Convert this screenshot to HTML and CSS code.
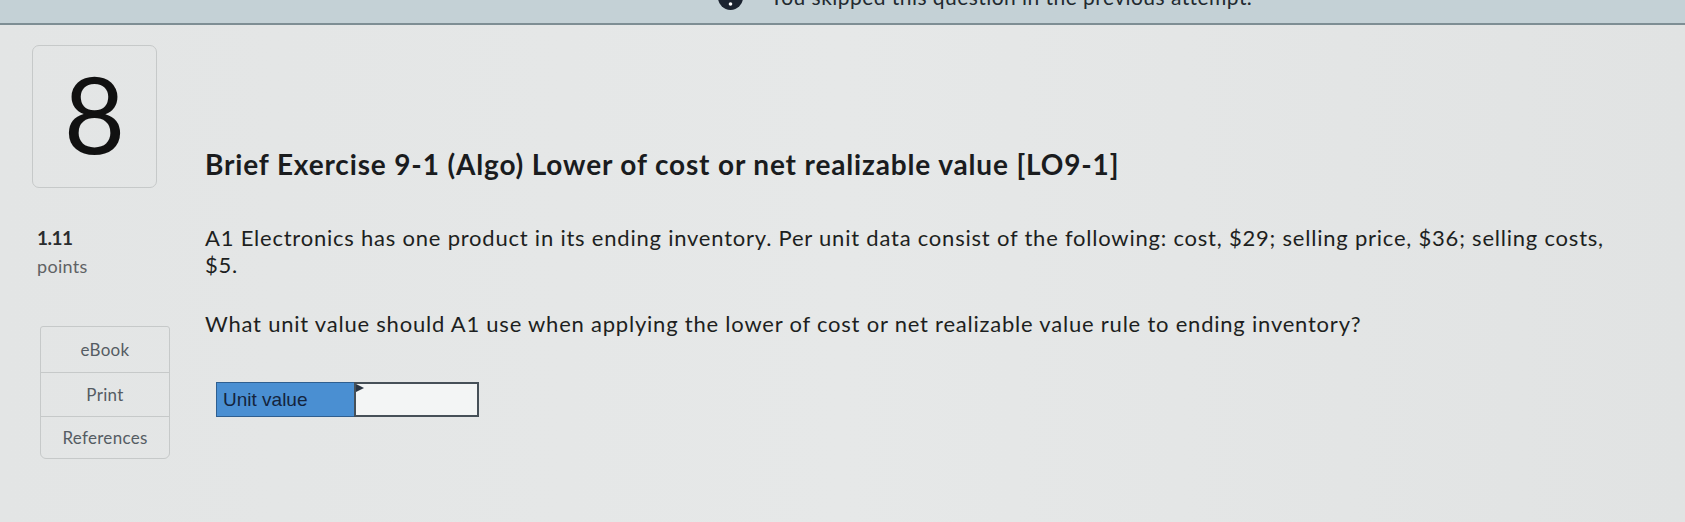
FILE: index.html
```html
<!DOCTYPE html>
<html lang="en">
<head>
<meta charset="utf-8">
<title>Brief Exercise 9-1</title>
<link rel="stylesheet" href="styles.css">
</head>
<body>
<div class="banner">
  <div class="banner-inner">
    <span class="banner-icon"><svg width="25" height="25" viewBox="0 0 25 25"><circle cx="12.5" cy="12.5" r="12.5" fill="#1b2330"/><rect x="11" y="5" width="3" height="10" rx="1.5" fill="#ffffff"/><circle cx="12.5" cy="19" r="1.8" fill="#ffffff"/></svg></span>
    <span class="banner-text">You skipped this question in the previous attempt.</span>
  </div>
</div>
<div class="page">
  <div class="header">
    <div class="qnum">8</div>
    <h1 class="title">Brief Exercise 9-1 (Algo) Lower of cost or net realizable value [LO9-1]</h1>
  </div>
  <div class="content">
    <aside class="side">
      <div class="points">
        <div class="points-value">1.11</div>
        <div class="points-label">points</div>
      </div>
      <div class="tools">
        <div class="tool tool-first">eBook</div>
        <div class="tool">Print</div>
        <div class="tool tool-last">References</div>
      </div>
    </aside>
    <main class="question">
      <p class="para">A1 Electronics has one product in its ending inventory. Per unit data consist of the following: cost, $29; selling price, $36; selling costs, $5.</p>
      <p class="para para-ask">What unit value should A1 use when applying the lower of cost or net realizable value rule to ending inventory?</p>
      <div class="answer">
        <div class="answer-label">Unit value</div>
        <div class="answer-input"><span class="answer-flag"></span></div>
      </div>
    </main>
  </div>
</div>
</body>
</html>
```
FILE: styles.css
```css
html, body {
  margin: 0;
  padding: 0;
}
body {
  width: 1685px;
  height: 522px;
  overflow: hidden;
  background: linear-gradient(90deg, #e3e5e5 0%, #e6e8e8 50%, #e1e3e3 100%);
  font-family: Lato, "Open Sans", Arial, sans-serif;
  color: #1d1f21;
}
.banner {
  height: 23px;
  background: #c4d1d6;
  border-bottom: 2px solid #7e8e94;
  overflow: hidden;
}
.banner-inner {
  display: flex;
  align-items: center;
  margin-top: -17px;
  padding-left: 718px;
  gap: 27px;
}
.banner-icon {
  display: flex;
  width: 25px;
  height: 25px;
}
.banner-text {
  font-size: 21px;
  line-height: 28px;
  color: #222a30;
  letter-spacing: 0.45px;
}
.page {
  padding-top: 20px;
}
.header {
  display: flex;
  align-items: flex-start;
}
.qnum {
  margin-left: 32px;
  width: 123px;
  border: 1px solid #c6c9c9;
  border-radius: 7px;
  display: flex;
  align-items: center;
  justify-content: center;
  font-size: 106px;
  font-weight: 400;
  line-height: 1;
  color: #111;
  padding-bottom: 8px;
  height: 133px;
  padding-top: 0;
  box-sizing: content-box;
}
.title {
  margin: 104px 0 0 48px;
  font-size: 28px;
  font-weight: 700;
  line-height: 30px;
  color: #1a1c1e;
  letter-spacing: 0.85px;
}
.content {
  display: grid;
  grid-template-columns: 205px 1fr;
  margin-top: 36px;
}
.side {
  display: flex;
  flex-direction: column;
  padding-left: 37px;
}
.points-value {
  font-size: 19px;
  font-weight: 700;
  line-height: 22px;
  color: #2a2c2e;
  letter-spacing: -0.5px;
  margin-top: 3px;
}
.points-label {
  margin-top: 6px;
  font-size: 18px;
  line-height: 22px;
  color: #5f6264;
  letter-spacing: 0.3px;
}
.tools {
  margin-top: 49px;
  margin-left: 3px;
  width: 128px;
  border: 1px solid #c6c9c9;
  border-radius: 3px 3px 6px 6px;
}
.tool {
  height: 43px;
  display: flex;
  align-items: center;
  justify-content: center;
  font-size: 17px;
  color: #555c63;
  border-top: 1px solid #c6c9c9;
  letter-spacing: 0.3px;
}
.tool-first {
  border-top: none;
  height: 45px;
}
.tool-last {
  height: 41px;
}
.question {
  padding-right: 75px;
}
.para {
  margin: 0;
  font-size: 22px;
  line-height: 27px;
  color: #1d1f21;
  letter-spacing: 0.78px;
}
.para-ask {
  margin-top: 32px;
}
.answer {
  display: flex;
  margin-top: 45px;
  margin-left: 11px;
  height: 35px;
}
.answer-label {
  width: 131px;
  background: #4a8fd2;
  border: 1px solid #2f5f90;
  border-right: none;
  display: flex;
  align-items: center;
  padding-left: 6px;
  font-family: "Liberation Sans", Arial, sans-serif;
  font-size: 19px;
  color: #14243c;
}
.answer-input {
  position: relative;
  width: 125px;
  background: #f3f5f5;
  border: 2px solid #465058;
  box-sizing: border-box;
}
.answer-flag {
  position: absolute;
  left: 0;
  top: 0;
  width: 0;
  height: 0;
  border-top: 4px solid transparent;
  border-bottom: 4px solid transparent;
  border-left: 8px solid #2b3542;
}
```
